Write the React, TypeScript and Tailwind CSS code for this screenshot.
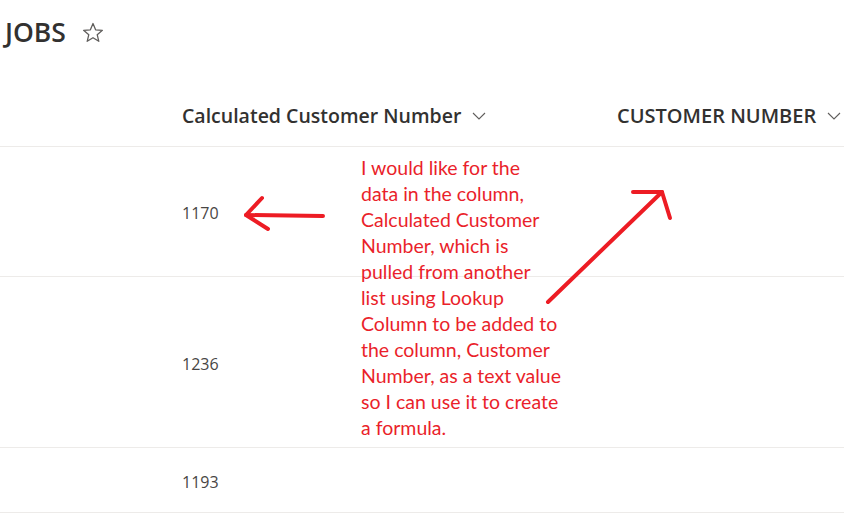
import React from "react";

const ui = { fontFamily: '"Open Sans", "Noto Sans", sans-serif' };
const hand = { fontFamily: 'Lato, "Noto Sans", sans-serif' };

function Chevron() {
  return (
    <svg width="14" height="8" viewBox="0 0 14 8" className="shrink-0">
      <path d="M1 1 L7 7 L13 1" fill="none" stroke="#605e5c" strokeWidth="1.1" />
    </svg>
  );
}

function Star() {
  return (
    <svg width="22" height="21" viewBox="0 0 22 21">
      <path
        d="M11 1.5 L13.6 7.8 L20.4 8.3 L15.2 12.7 L16.8 19.3 L11 15.7 L5.2 19.3 L6.8 12.7 L1.6 8.3 L8.4 7.8 Z"
        fill="none"
        stroke="#605e5c"
        strokeWidth="1.3"
        strokeLinejoin="round"
      />
    </svg>
  );
}

const rows = [
  { value: "1170", h: "h-[129px]" },
  { value: "1236", h: "h-[170px]" },
  { value: "1193", h: "h-[64px]" },
];

const note = [
  "I would like for the",
  "data in the column,",
  "Calculated Customer",
  "Number, which is",
  "pulled from another",
  "list using Lookup",
  "Column to be added to",
  "the column, Customer",
  "Number, as a text value",
  "so I can use it to create",
  "a formula.",
];

export default function App() {
  return (
    <div className="relative w-[844px] h-[519px] bg-white overflow-hidden" style={ui}>
      <div className="h-[65px] flex items-center pl-[5px] gap-[16px] pb-[1px]">
        <h1 className="text-[26.5px] font-semibold text-[#323130] leading-none">JOBS</h1>
        <Star />
      </div>

      <div className="h-[82px] flex items-end pb-[18px] border-b border-[#edebe9] text-[#323130] whitespace-nowrap">
        <div className="w-[182px] shrink-0" />
        <div className="w-[435px] shrink-0 flex items-center gap-[11px]">
          <span className="text-[19.5px] font-semibold leading-6">Calculated Customer Number</span>
          <Chevron />
        </div>
        <div className="flex items-center gap-[11px]">
          <span className="text-[20px] font-semibold leading-6">CUSTOMER NUMBER</span>
          <Chevron />
        </div>
      </div>

      {rows.map((r) => (
        <div key={r.value} className={`${r.h} flex items-center border-b border-[#edebe9] box-content`}>
          <div className="w-[182px]" />
          <div className="text-[16px] text-[#484644] pt-[3px]">{r.value}</div>
        </div>
      ))}

      {/* annotation backdrop */}
      <div className="absolute left-[265px] top-[277px] w-[344px] h-[1px] bg-white" />
      <div className="absolute left-[288px] top-[448px] w-[197px] h-[1px] bg-white" />
      <div className="absolute left-[438px] top-[147px] w-[8px] h-[1px] bg-white" />

      <div className="absolute left-[361px] top-[155px] text-[19.5px] leading-[26px] text-[#ea1f2b]" style={hand}>
        {note.map((l) => (
          <div key={l}>{l}</div>
        ))}
      </div>

      <svg className="absolute inset-0 pointer-events-none" width="844" height="519">
        <g fill="none" stroke="#ed1c24" strokeWidth="4" strokeLinecap="round" strokeLinejoin="round">
          <path d="M323 216 L246 215" />
          <path d="M262 198 L246 215 L268 229" />
          <path d="M548 302 L662 192" />
          <path d="M633 192 L662 192 L670 218" />
        </g>
      </svg>
    </div>
  );
}
